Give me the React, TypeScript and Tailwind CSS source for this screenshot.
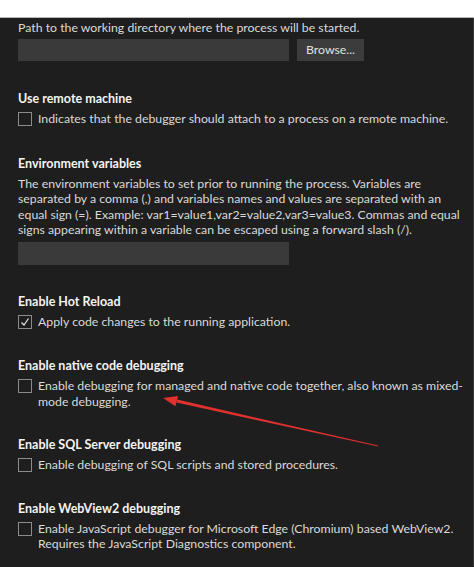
const font = { fontFamily: 'Lato, "Noto Sans", sans-serif' };

function Checkbox({ checked = false }: { checked?: boolean }) {
  return (
    <span className="mt-[1px] flex h-[14px] w-[14px] shrink-0 items-center justify-center border border-[#8b8b8b]">
      {checked && (
        <svg width="10" height="10" viewBox="0 0 10 10" fill="none">
          <path d="M1.5 5.5 L4 8 L8.5 1.5" stroke="#e6e6e6" strokeWidth="1.2" />
        </svg>
      )}
    </span>
  );
}

function CheckRow({ checked, children }: { checked?: boolean; children: React.ReactNode }) {
  return (
    <div className="mt-1 flex items-start gap-[6px]">
      <Checkbox checked={checked} />
      <p className="text-[12.3px] leading-[15.5px] text-[#dadada]">{children}</p>
    </div>
  );
}

function Heading({ children, className = "" }: { children: React.ReactNode; className?: string }) {
  return <h2 className={`text-[12.5px] font-bold leading-4 text-[#f4f4f4] ${className}`}>{children}</h2>;
}

export default function App() {
  return (
    <div className="relative h-[567px] w-[474px] overflow-hidden bg-[#1e1e1e]" style={font}>
      <div className="h-[18px] border-b border-[#b8b8b8] bg-white" />
      <div className="border-r border-[#3a3a3a] pl-[18px] pr-[1px] pt-[2px]" style={{ height: 548 }}>
        <p className="text-[12.3px] leading-4 text-[#dadada]">
          Path to the working directory where the process will be started.
        </p>
        <div className="mt-[3px] flex gap-2">
          <div className="h-[22px] w-[271px] bg-[#3a3a3a]" />
          <button className="h-[22px] w-[67px] bg-[#3c3c3c] text-[12.3px] text-[#e0e0e0]">Browse...</button>
        </div>

        <Heading className="mt-[30px]">Use remote machine</Heading>
        <CheckRow>Indicates that the debugger should attach to a process on a remote machine.</CheckRow>

        <Heading className="mt-[29px]">Environment variables</Heading>
        <p className="mt-1 text-[12.3px] leading-[15.5px] text-[#dadada]">
          The environment variables to set prior to running the process. Variables are separated by a comma (,) and
          variables names and values are separated with an equal sign (=). Example:
          var1=value1,var2=value2,var3=value3. Commas and equal signs appearing within a variable can be escaped
          using a forward slash (/).
        </p>
        <div className="mt-1 h-[23px] w-[271px] bg-[#3a3a3a]" />

        <Heading className="mt-[29px]">Enable Hot Reload</Heading>
        <CheckRow checked>Apply code changes to the running application.</CheckRow>

        <Heading className="mt-[29px]">Enable native code debugging</Heading>
        <CheckRow>
          Enable debugging for managed and native code together, also known as mixed-mode debugging.
        </CheckRow>

        <Heading className="mt-[28px]">Enable SQL Server debugging</Heading>
        <CheckRow>Enable debugging of SQL scripts and stored procedures.</CheckRow>

        <Heading className="mt-[28px]">Enable WebView2 debugging</Heading>
        <CheckRow>
          Enable JavaScript debugger for Microsoft Edge (Chromium) based WebView2. Requires the JavaScript
          Diagnostics component.
        </CheckRow>
      </div>

      {/* annotation arrow */}
      <svg className="pointer-events-none absolute left-0 top-0" width="474" height="567">
        <polygon points="378,445.6 378.3,446.6 176.6,402.6 177.2,399.6" fill="#e0312f" />
        <polygon points="163,398 178.2,395.9 175.4,406.2" fill="#e0312f" />
      </svg>
    </div>
  );
}
